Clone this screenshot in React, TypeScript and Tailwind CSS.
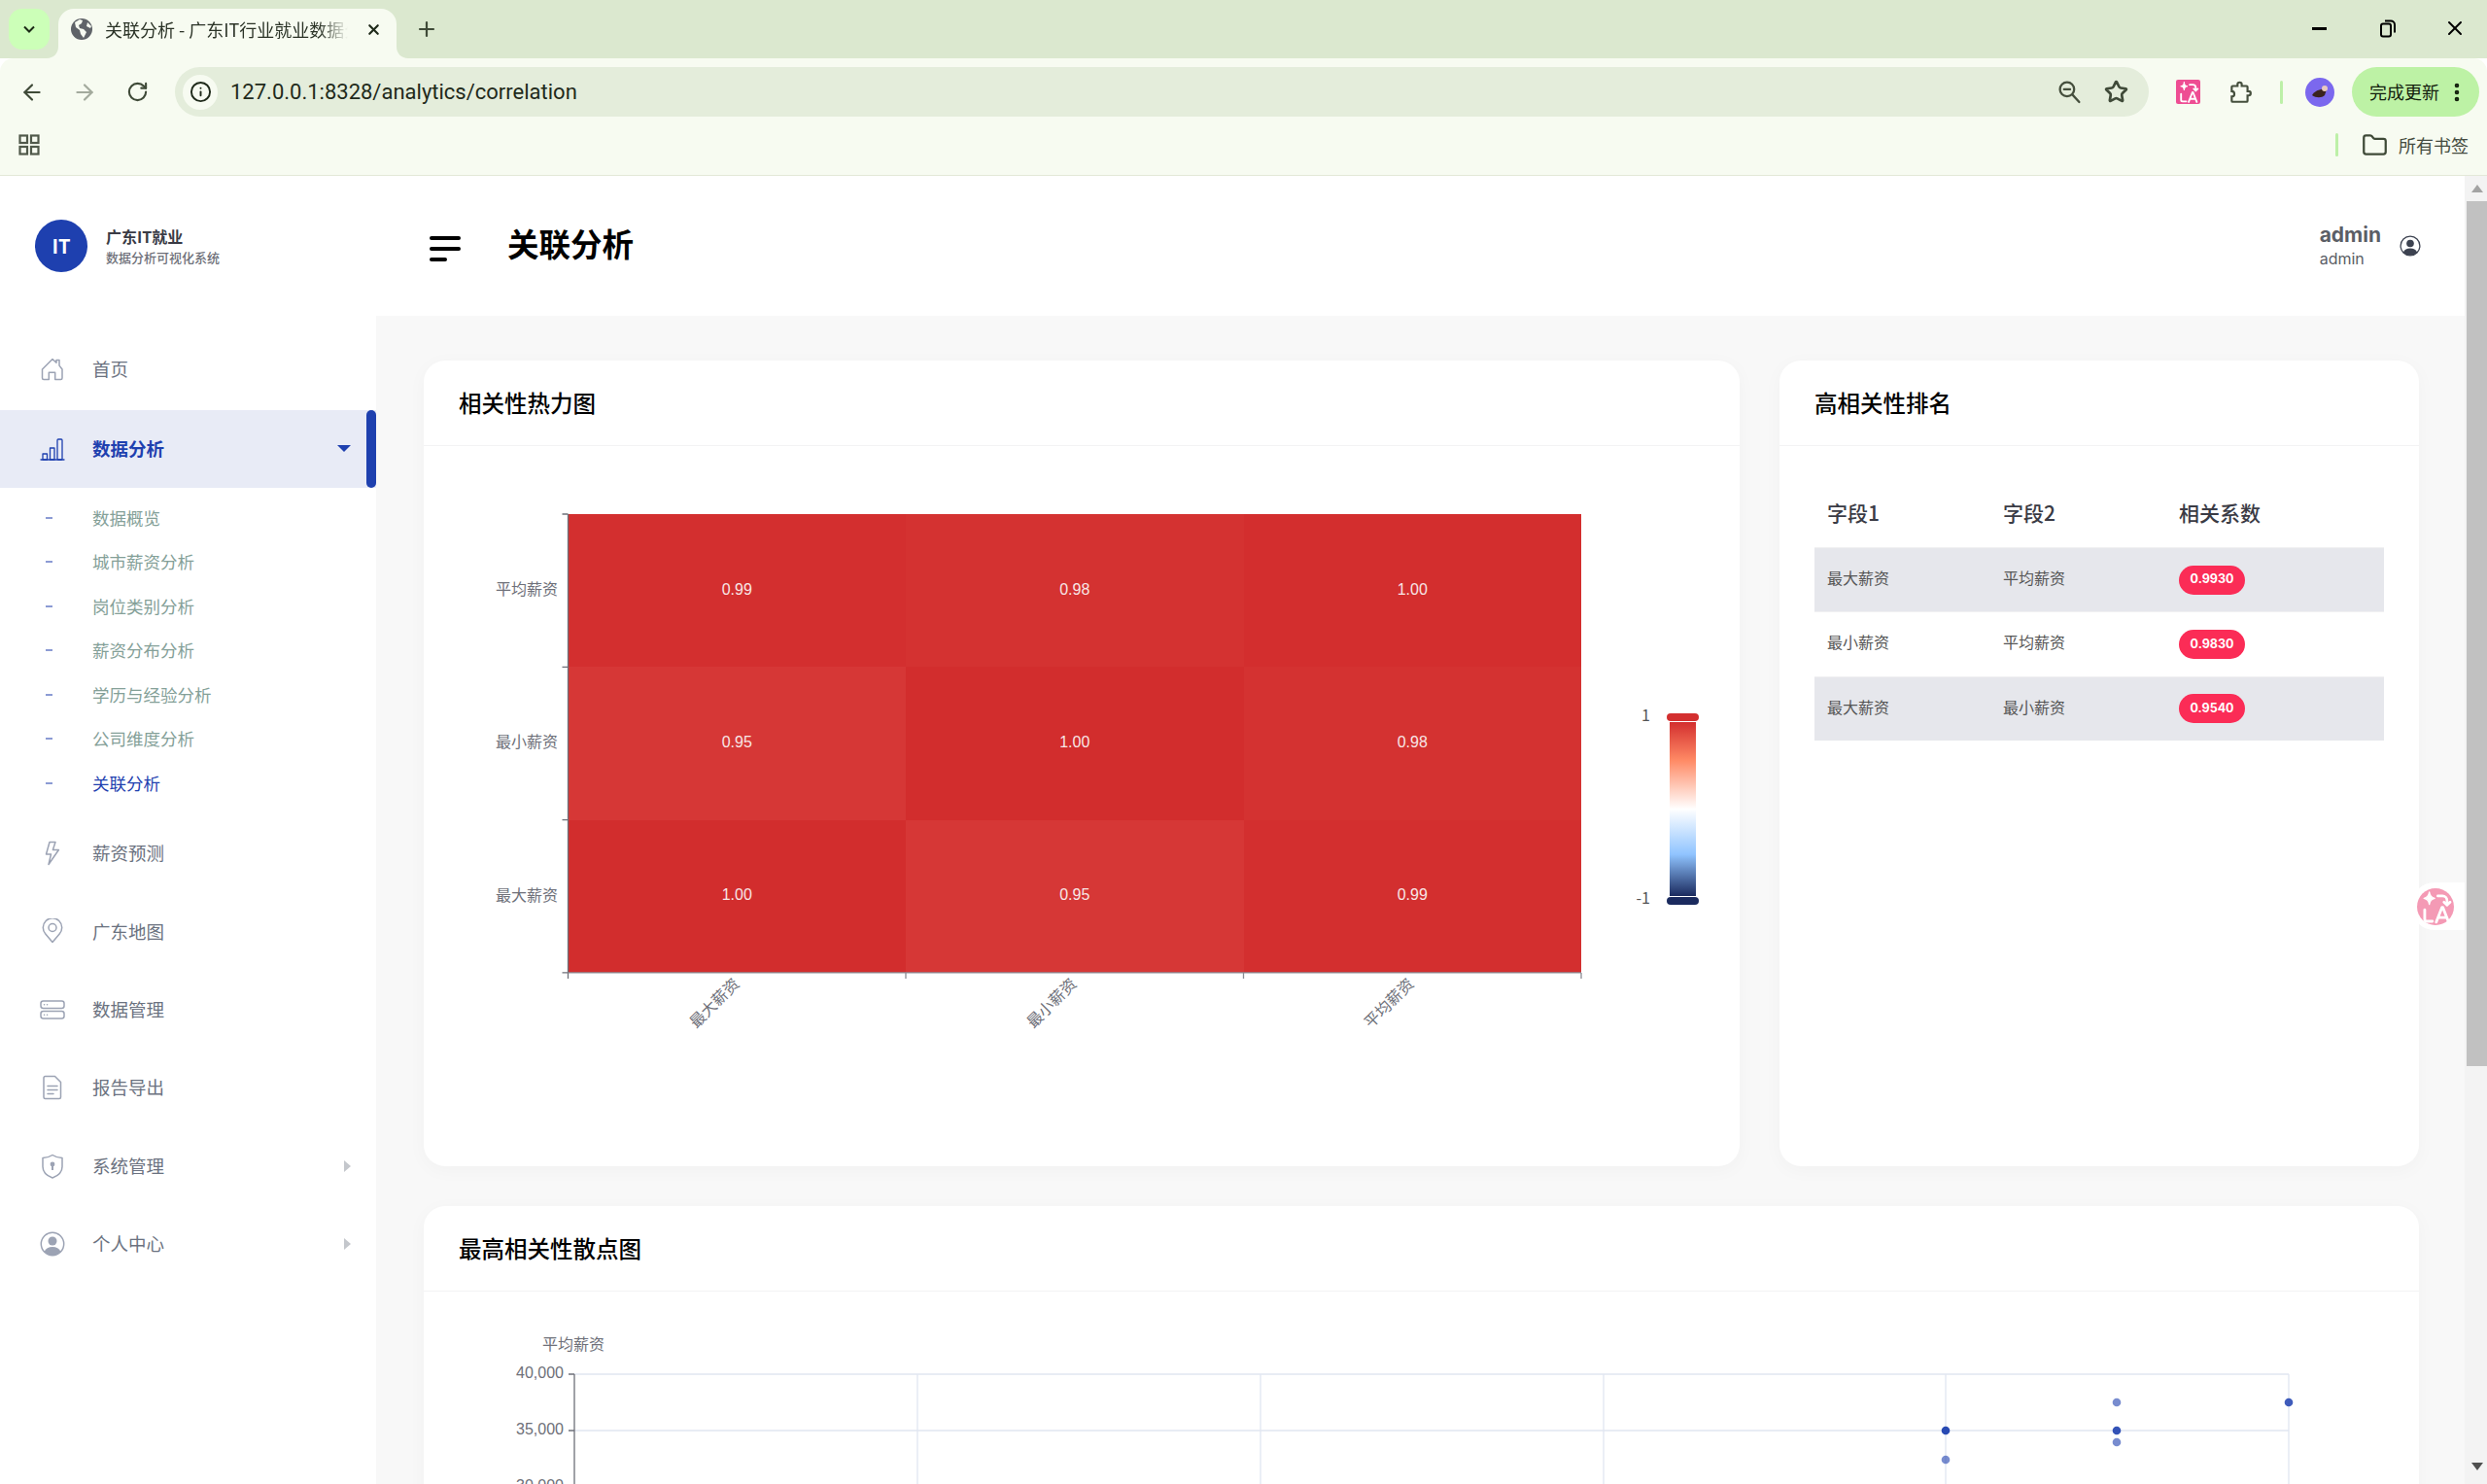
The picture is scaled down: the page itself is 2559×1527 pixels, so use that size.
import { ArrowLeft, ArrowRight, EllipsisVertical, Folder, Info, Plus, RotateCw, Star, X } from 'lucide-react';
import type { ReactNode } from 'react';

const line = { fill: 'none', stroke: 'currentColor', strokeWidth: 1.5, strokeLinecap: 'round', strokeLinejoin: 'round' } as const;

function NavIcon({ children }: { children: ReactNode }) {
  return (
    <svg viewBox="0 0 26 26" className="w-[26px] h-[26px]">
      {children}
    </svg>
  );
}

const icons = {
  home: <path {...line} d="M2.5 13 13 2.5l4 3.8V3.5h3v5.6l3 3.9V22a1.5 1.5 0 0 1-1.5 1.5h-5.8v-7.3H9.3v7.3H4A1.5 1.5 0 0 1 2.500 22z" />,
  bars: (
    <g {...line} strokeWidth={1.3}>
      <path d="M1 24h24" />
      <rect x="3" y="18" width="4.500" height="6" />
      <rect x="10.500" y="12" width="4.500" height="12" />
      <rect x="18" y="3" width="5" height="21" rx="1" />
    </g>
  ),
  bolt: <path {...line} d="M10 1.500h6l-2.600 8h6L9 24.500l2.500-10.500H6.500z" />,
  pin: (
    <g {...line}>
      <path d="M13 24.500 5.800 16a9.700 9.700 0 1 1 14.400 0z" />
      <circle cx="13" cy="9.500" r="4" />
    </g>
  ),
  server: (
    <g {...line}>
      <rect x="1" y="4" width="24" height="7.500" rx="2.500" />
      <rect x="1" y="14.500" width="24" height="7.500" rx="2.500" />
      <path d="M4.500 7.700h.1M7.500 7.700h.1M4.500 18.200h.1M7.500 18.200h.1" />
    </g>
  ),
  doc: (
    <g {...line}>
      <path d="M5.500 1.500h10l6 6V23a1.500 1.500 0 0 1-1.500 1.500H5.500A1.500 1.500 0 0 1 4 23V3a1.500 1.500 0 0 1 1.500-1.500z" />
      <path d="M8 11.500h10M8 15.500h10M8 19.500h6" />
    </g>
  ),
  shield: (
    <g>
      <path {...line} d="M13 1.500c3 2 6.500 2.800 10 3v9c0 5.500-4 9.300-10 11.500C7 22.800 3 19 3 13.500v-9c3.500-.2 7-1 10-3z" />
      <circle cx="13" cy="11" r="2.400" fill="currentColor" />
      <rect x="12" y="11" width="2" height="6" fill="currentColor" />
    </g>
  ),
  user: (
    <g>
      <circle cx="13" cy="13" r="11.700" fill="none" stroke="currentColor" strokeWidth={1.5} />
      <circle cx="13" cy="10" r="4.500" fill="currentColor" />
      <path d="M4.500 21c1.500-3.500 4.500-5 8.500-5s7 1.500 8.500 5a11.700 11.700 0 0 1-17 0z" fill="currentColor" />
    </g>
  ),
};

const subMenu = ['数据概览', '城市薪资分析', '岗位类别分析', '薪资分布分析', '学历与经验分析', '公司维度分析', '关联分析'];
const lowerMenu = [
  { label: '薪资预测', icon: icons.bolt },
  { label: '广东地图', icon: icons.pin },
  { label: '数据管理', icon: icons.server },
  { label: '报告导出', icon: icons.doc },
  { label: '系统管理', icon: icons.shield, arrow: true },
  { label: '个人中心', icon: icons.user, arrow: true },
];

function TranslateGlyph() {
  return (
    <g fill="none" stroke="#fff" strokeLinecap="round" strokeLinejoin="round">
      <path d="M13.500 5h3a3 3 0 0 1 3 3v3M17.500 9l2 2 2-2" strokeWidth={1.7} />
      <path d="M8 2.500c.4 2.700 1.300 3.600 3.500 4-2.200.4-3.100 1.300-3.500 4-.4-2.700-1.300-3.600-3.500-4 2.200-.4 3.100-1.300 3.500-4z" fill="#fff" strokeWidth={0.8} />
      <path d="M5 14v6a1.500 1.500 0 0 0 1.500 1.500H10" strokeWidth={1.8} />
      <path d="M12.500 22l3.700-9.500h.6L20.500 22M14 19h5" strokeWidth={1.8} />
    </g>
  );
}

function Chrome() {
  return (
    <div className="flex flex-col text-[#3f4a38]">
      <div className="h-[60px] flex bg-[#dbe8cf]">
        <div className="ml-[9px] mt-[9px] w-[42px] h-[42px] rounded-[14px] bg-[#ccffb8] flex items-center justify-center">
          <svg viewBox="0 0 12 8" className="w-[12px] h-[8px]">
            <path d="M1 1.500 6 6.500l5-5" fill="none" stroke="#1c2a16" strokeWidth={2} />
          </svg>
        </div>
        <div className="relative ml-[9px] mt-[9px] w-[348px] h-[51px] pb-[9px] rounded-t-[16px] bg-[#f7fbf1] flex items-center pl-[13px]">
          <svg viewBox="0 0 12 12" className="absolute left-[-12px] bottom-0 w-[12px] h-[12px]">
            <path d="M12 0v12H0c7 0 12-5 12-12z" fill="#f7fbf1" />
          </svg>
          <svg viewBox="0 0 12 12" className="absolute right-[-12px] bottom-0 w-[12px] h-[12px]">
            <path d="M0 0v12h12C5 12 0 7 0 0z" fill="#f7fbf1" />
          </svg>
          <svg viewBox="0 0 22 22" className="w-[22px] h-[22px] shrink-0">
            <circle cx="11" cy="11" r="11" fill="#5f6368" />
            <path d="M9 1 4 4l1 5 4 3 1 4 3 4 3-6-3-3-4-1-1-3 3-2 1-3zM17 4l-1 4 4 2 1-2z" fill="#f7fbf1" />
          </svg>
          <div className="ml-[13px] w-[250px] overflow-hidden whitespace-nowrap text-[18px] text-[#2b3327] [mask-image:linear-gradient(to_right,black_88%,transparent)]">
            关联分析 - 广东IT行业就业数据分析可视化系统
          </div>
          <X size={17} strokeWidth={3} className="ml-[18px] text-[#1f2a1a]" />
        </div>
        <Plus size={24} strokeWidth={2.2} className="ml-[19px] mt-[18px] text-[#3f4a38]" />
        <div className="ml-auto flex items-start pt-[19px] text-black">
          <div className="mt-[9px] mr-[54px] w-[15px] h-[2.500px] bg-black" />
          <svg viewBox="0 0 18 20" className="w-[18px] h-[20px] mr-[48px]" fill="none" stroke="black" strokeWidth={2}>
            <rect x="2" y="5.500" width="10" height="13" rx="2" />
            <path d="M6 2.500h6a4 4 0 0 1 4 4v8" />
          </svg>
          <X size={24} strokeWidth={2} className="mr-[21px] -mt-[2px]" />
        </div>
      </div>
      <div className="py-[9px] flex items-center pl-[6px] pr-[8px] bg-[#f7fbf1] rounded-t-[14px]">
        <div className="w-[54px] flex justify-center"><ArrowLeft size={26} strokeWidth={2} /></div>
        <div className="w-[54px] flex justify-center"><ArrowRight size={26} strokeWidth={2} className="opacity-45" /></div>
        <div className="w-[54px] flex justify-center"><RotateCw size={23} strokeWidth={2.2} /></div>
        <div className="ml-[12px] w-[2031px] shrink-0 h-[51px] rounded-full bg-[#e4eddb] flex items-center pl-[8px] pr-[21px]">
          <div className="w-[36px] h-[36px] rounded-full bg-[#f7fbf1] flex items-center justify-center">
            <Info size={23} strokeWidth={2} className="text-[#1f2a1a]" />
          </div>
          <span className="ml-[13px] font-['Roboto',sans-serif] text-[22px] text-[#1f2a1a]">127.0.0.1:8328/analytics/correlation</span>
          <svg viewBox="0 0 24 24" className="ml-auto w-[25px] h-[25px]" fill="none" stroke="#454f3d" strokeWidth={2.2} strokeLinecap="round">
            <circle cx="9.500" cy="9.500" r="7" />
            <path d="M6.500 9.500h6M15 15l6.500 7" />
          </svg>
          <Star size={25} strokeWidth={2.6} className="ml-[23px]" />
        </div>
        <svg viewBox="0 0 24 24" className="ml-[28px] w-[25px] h-[25px]">
          <rect width="24" height="24" rx="2" fill="#ee4d93" />
          <TranslateGlyph />
        </svg>
        <svg viewBox="0 0 24 24" className="ml-[28px] w-[26px] h-[26px]">
          <path d="M5 6h4.500V4.500a2 2 0 0 1 4 0V6H18a1 1 0 0 1 1 1v4h1a2 2 0 0 1 0 4h-1v5a1 1 0 0 1-1 1H5a1 1 0 0 1-1-1v-4a2.500 2.500 0 0 0 0-5V7a1 1 0 0 1 1-1z" fill="none" stroke="#454f3d" strokeWidth={2} />
        </svg>
        <div className="ml-[28px] w-[3px] h-[24px] rounded-full bg-[#bdf0a8]" />
        <svg viewBox="0 0 30 30" className="ml-[23px] w-[30px] h-[30px]">
          <circle cx="15" cy="15" r="15" fill="#7b68ee" />
          <path d="M7 18c3-5 9-7 15-6l-2 6c-3 3-9 3-13 0z" fill="#3a2320" />
          <circle cx="20" cy="11" r="3" fill="#e9c9c0" />
        </svg>
        <div className="ml-[18px] w-[131px] h-[51px] rounded-full bg-[#bdf2a5] flex items-center pl-[18px] text-[18px] text-[#13200d]">
          完成更新
          <EllipsisVertical size={24} strokeWidth={2.6} className="ml-[6px]" />
        </div>
      </div>
      <div className="h-[52px] pb-[11px] flex items-center bg-[#f7fbf1] border-b border-[#e3e8d8]">
        <svg viewBox="0 0 22 22" className="ml-[19px] w-[22px] h-[22px]" fill="none" stroke="#50594a" strokeWidth={2.2}>
          <rect x="1.500" y="1.500" width="7.500" height="7.500" />
          <rect x="13" y="1.500" width="7.500" height="7.500" />
          <rect x="1.500" y="13" width="7.500" height="7.500" />
          <rect x="13" y="13" width="7.500" height="7.500" />
        </svg>
        <div className="ml-auto w-[3px] h-[24px] rounded-full bg-[#bdf0a8]" />
        <Folder size={27} strokeWidth={2} className="ml-[24px]" />
        <span className="ml-[11px] mr-[19px] text-[18px] text-[#444b40]">所有书签</span>
      </div>
    </div>
  );
}

function Sidebar() {
  return (
    <aside className="w-[387px] shrink-0 bg-white">
      <div className="h-[144px] flex items-center pl-[36px]">
        <div className="w-[54px] h-[54px] rounded-full bg-[#1e40af] flex items-center justify-center text-white text-[20px] font-bold">IT</div>
        <div className="ml-[19px]">
          <div className="text-[16px] leading-[24px] font-bold text-[#3a3b45]">广东IT就业</div>
          <div className="text-[13px] leading-[20px] font-medium text-[#6e7079]">数据分析可视化系统</div>
        </div>
      </div>
      <nav className="pt-[15px] text-[18.500px]">
        <div className="h-[80.400px] flex items-center text-[#6b7280]">
          <div className="w-[95px] pl-[41px] text-[#9ca3b4]"><NavIcon>{icons.home}</NavIcon></div>
          <span>首页</span>
        </div>
        <div className="relative mt-[1.500px] h-[80px] flex items-center bg-[#e8ebf6] text-[#1e40af] font-bold">
          <div className="w-[95px] pl-[41px]"><NavIcon>{icons.bars}</NavIcon></div>
          <span>数据分析</span>
          <div className="ml-auto mr-[26px] w-0 h-0 border-x-[7px] border-x-transparent border-t-[7px] border-t-[#1e40af]" />
          <div className="absolute right-0 top-0 bottom-0 w-[10px] rounded-[5px] bg-[#1e40af]" />
        </div>
        <div className="pt-[8px] pb-[9.500px] text-[17.500px]">
          {subMenu.map((item) => (
            <div key={item} className={`h-[45.500px] flex items-center ${item === '关联分析' ? 'text-[#1e40af]' : 'text-[#84a098]'}`}>
              <div className="ml-[47px] mr-[41px] w-[7px] h-[2px] bg-[#8c9bd4]" />
              <span>{item}</span>
            </div>
          ))}
        </div>
        {lowerMenu.map((item) => (
          <div key={item.label} className="h-[80.400px] flex items-center text-[#6b7280]">
            <div className="w-[95px] pl-[41px] text-[#9ca3b4]"><NavIcon>{item.icon}</NavIcon></div>
            <span>{item.label}</span>
            {item.arrow && <div className="ml-auto mr-[26px] w-0 h-0 border-y-[6.500px] border-y-transparent border-l-[7px] border-l-[#c4c7cc]" />}
          </div>
        ))}
      </nav>
    </aside>
  );
}

const heatCells = [
  { c: 0, r: 0, v: '0.99', fill: '#d32f2f' },
  { c: 1, r: 0, v: '0.98', fill: '#d43231' },
  { c: 2, r: 0, v: '1.00', fill: '#d32e2e' },
  { c: 0, r: 1, v: '0.95', fill: '#d63736' },
  { c: 1, r: 1, v: '1.00', fill: '#d22d2d' },
  { c: 2, r: 1, v: '0.98', fill: '#d43231' },
  { c: 0, r: 2, v: '1.00', fill: '#d22d2d' },
  { c: 1, r: 2, v: '0.95', fill: '#d63736' },
  { c: 2, r: 2, v: '0.99', fill: '#d32f2f' },
];

// chart coordinates are relative to the card body, origin (436, 459)
function Heatmap() {
  const x0 = 148.500;
  const y0 = 70;
  const w = 347.500;
  const h = 157.300;
  const names = ['平均薪资', '最小薪资', '最大薪资'];
  const cols = ['最大薪资', '最小薪资', '平均薪资'];
  return (
    <svg viewBox="0 0 1354 741" className="block w-[1354px] h-[741px]">
      <defs>
        <linearGradient id="legend" x1="0" y1="0" x2="0" y2="1">
          <stop offset="0" stopColor="#d32f2f" />
          <stop offset="0.22" stopColor="#ff8a65" />
          <stop offset="0.5" stopColor="#ffffff" />
          <stop offset="0.76" stopColor="#90c4ff" />
          <stop offset="1" stopColor="#1a2a5e" />
        </linearGradient>
      </defs>
      {heatCells.map((d) => (
        <g key={`${d.c}-${d.r}`}>
          <rect x={x0 + d.c * w} y={y0 + d.r * h} width={w} height={h} fill={d.fill} shapeRendering="crispEdges" />
          <text x={x0 + (d.c + 0.5) * w} y={y0 + (d.r + 0.5) * h} textAnchor="middle" dominantBaseline="middle" fontSize="16" fill="#f8e6e6" className="font-['Liberation_Sans',sans-serif]">{d.v}</text>
        </g>
      ))}
      <path d={`M${x0} ${y0}v${3 * h + 6}M${x0 - 6} ${y0}h6M${x0 - 6} ${y0 + h}h6M${x0 - 6} ${y0 + 2 * h}h6M${x0 - 6} ${y0 + 3 * h}h6`} stroke="#6e7079" strokeWidth={1.300} fill="none" />
      <path d={`M${x0 + w} ${y0 + 3 * h}v6M${x0 + 2 * w} ${y0 + 3 * h}v6M${x0 + 3 * w} ${y0 + 3 * h}v6M${x0} ${y0 + 3 * h}h${3 * w}`} stroke="#8a8c94" strokeWidth={1.300} fill="none" />
      {names.map((n, i) => (
        <text key={n} x={138} y={y0 + (i + 0.5) * h} textAnchor="end" dominantBaseline="middle" fontSize="16" fill="#6e7079">{n}</text>
      ))}
      {cols.map((n, i) => (
        <text key={n} x={0} y={0} transform={`translate(${300 + i * 347} 574) rotate(-45)`} textAnchor="middle" dominantBaseline="middle" fontSize="16" fill="#6e7079">{n}</text>
      ))}
      <rect x={1282} y={284} width={27} height={179} fill="url(#legend)" />
      <rect x={1279} y={275} width={33} height={8} rx={4} fill="#d32f2f" />
      <rect x={1279} y={464} width={33} height={8} rx={4} fill="#1a2a5e" />
      <text x={1262} y={279} textAnchor="end" dominantBaseline="middle" fontSize="16" fill="#555">1</text>
      <text x={1262} y={467} textAnchor="end" dominantBaseline="middle" fontSize="16" fill="#555">-1</text>
    </svg>
  );
}

// origin (436, 1329)
function Scatter() {
  const xs = [155, 508, 861, 1214, 1566, 1919];
  const ys = [85, 143, 201];
  const points = [
    { x: 1566, y: 143, o: 0.95 },
    { x: 1566, y: 173, o: 0.6 },
    { x: 1742, y: 114, o: 0.6 },
    { x: 1742, y: 143, o: 0.9 },
    { x: 1742, y: 155, o: 0.6 },
    { x: 1919, y: 114, o: 0.85 },
  ];
  return (
    <svg viewBox="0 0 2053 500" className="block w-[2053px] h-[500px]">
      {xs.slice(1).map((x) => <line key={x} x1={x} x2={x} y1={85} y2={400} stroke="#e0e6f1" strokeWidth={1.300} />)}
      {ys.map((y) => <line key={y} x1={155} x2={1919} y1={y} y2={y} stroke="#e0e6f1" strokeWidth={1.300} />)}
      <path d="M155 85v315M149 85h6M149 143h6M149 201h6" stroke="#6e7079" strokeWidth={1.300} fill="none" />
      <text x={154} y={56} textAnchor="middle" dominantBaseline="middle" fontSize="16" fill="#6e7079">平均薪资</text>
      {[['40,000', 85], ['35,000', 143], ['30,000', 201]].map(([t, y]) => (
        <text key={t} x={144} y={y} textAnchor="end" dominantBaseline="middle" fontSize="16" fill="#6e7079" className="font-['Liberation_Sans',sans-serif]">{t}</text>
      ))}
      {points.map((p) => <circle key={`${p.x}-${p.y}`} cx={p.x} cy={p.y} r={4.300} fill="#1e40af" opacity={p.o} />)}
    </svg>
  );
}

const ranks = [
  { a: '最大薪资', b: '平均薪资', v: '0.9930' },
  { a: '最小薪资', b: '平均薪资', v: '0.9830' },
  { a: '最大薪资', b: '最小薪资', v: '0.9540' },
];

function Card({ title, className, children }: { title: string; className: string; children: ReactNode }) {
  return (
    <section className={`bg-white rounded-[22px] overflow-hidden shadow-[0_4px_20px_rgba(0,0,0,0.03)] ${className}`}>
      <h3 className="h-[88px] pl-[36px] flex items-center border-b border-[#f3f3f4] text-[23.500px] font-medium text-black">{title}</h3>
      {children}
    </section>
  );
}

export default function App() {
  return (
    <div className="relative w-full h-[1527px] overflow-hidden flex flex-col bg-white font-['Noto_Sans_CJK_SC',sans-serif]">
      <Chrome />
      <div className="flex-1 min-h-0 flex">
        <Sidebar />
        <main className="w-[2149px] shrink-0 flex flex-col">
          <header className="h-[144px] shrink-0 bg-white flex items-center">
            <div className="ml-[55px] mt-[5px] w-[32px] flex flex-col gap-[7px]">
              <div className="h-[4px] bg-black rounded-full" />
              <div className="h-[4px] bg-black rounded-full" />
              <div className="h-[4px] w-[18px] bg-black rounded-full" />
            </div>
            <h1 className="ml-[48px] mb-[6px] text-[32.500px] font-bold text-black">关联分析</h1>
            <div className="ml-auto font-['Inter',sans-serif] text-[#5b5e66]">
              <div className="text-[21px] leading-[26px] font-bold">admin</div>
              <div className="text-[16px] leading-[22px]">admin</div>
            </div>
            <svg viewBox="0 0 26 26" className="ml-[19px] mr-[45px] w-[22px] h-[22px] text-[#3c4250]">{icons.user}</svg>
          </header>
          <div className="flex-1 bg-[#f8f8f8] pt-[46px] pl-[49px] pr-[47px]">
            <div className="flex gap-[41px]">
              <Card title="相关性热力图" className="w-[1354px] h-[829px] shrink-0">
                <Heatmap />
              </Card>
              <Card title="高相关性排名" className="flex-1 h-[829px]">
                <div className="mx-[36px] mt-[34px] text-[16px] text-[#555]">
                  <div className="grid grid-cols-[181px_181px_1fr] px-[13px] h-[70px] items-center text-[21px] font-medium text-[#3a3b45]">
                    <div>字段1</div>
                    <div>字段2</div>
                    <div>相关系数</div>
                  </div>
                  {ranks.map((r, i) => (
                    <div key={r.v} className={`grid grid-cols-[181px_181px_1fr] px-[13px] h-[66.300px] items-center border-t border-[#f0f0f2] ${i % 2 === 0 ? 'bg-[#e6e7ec]' : 'bg-white'}`}>
                      <div className="pb-[5px]">{r.a}</div>
                      <div className="pb-[5px]">{r.b}</div>
                      <div>
                        <span className="inline-flex items-center justify-center w-[68px] h-[30px] rounded-[15px] bg-[#fb2c56] text-white text-[12.500px] font-bold font-['Inter',sans-serif]">{r.v}</span>
                      </div>
                    </div>
                  ))}
                </div>
              </Card>
            </div>
            <Card title="最高相关性散点图" className="mt-[41px] h-[600px]">
              <Scatter />
            </Card>
          </div>
        </main>
        <div className="w-[23px] shrink-0 bg-[#f3f3f3] pl-[2px] flex flex-col">
          <div className="h-[26px] flex items-center justify-center">
            <div className="w-0 h-0 border-x-[6px] border-x-transparent border-b-[8px] border-b-[#a3a3a3]" />
          </div>
          <div className="h-[890px] bg-[#c1c1c1]" />
          <div className="mt-auto h-[22px] flex items-start justify-center">
            <div className="w-0 h-0 border-x-[6px] border-x-transparent border-t-[8px] border-t-[#505050]" />
          </div>
        </div>
      </div>
      <div className="absolute left-[2481px] top-[908px] w-[55px] h-[49px] bg-white rounded-l-[24px] flex items-center pl-[6px]">
        <svg viewBox="0 0 24 24" className="w-[38px] h-[38px]">
          <circle cx="12" cy="12" r="12" fill="#f49ab5" />
          <TranslateGlyph />
        </svg>
      </div>
    </div>
  );
}
